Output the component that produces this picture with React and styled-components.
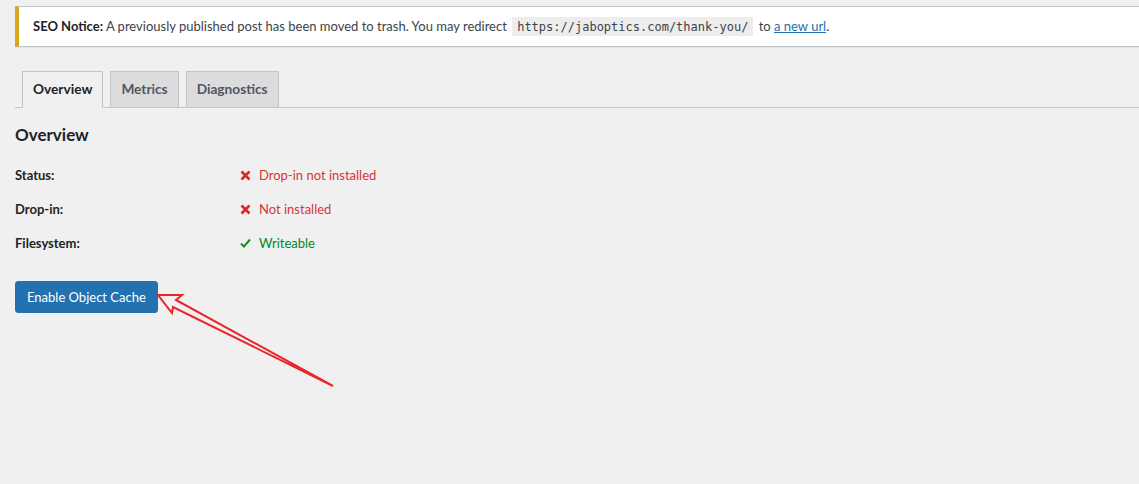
import React from "react";
import styled, { createGlobalStyle } from "styled-components";

const Global = createGlobalStyle`
  html, body { margin: 0; padding: 0; background: #f0f0f1; }
  body {
    font-family: Lato, "Noto Sans", sans-serif;
    font-size: 13px;
    line-height: 1.4;
    color: #3c434a;
  }
`;

const Page = styled.div`
  position: relative;
  width: 1139px;
  height: 484px;
  overflow: hidden;
  padding: 6px 0 0 15px;
  box-sizing: border-box;
`;

const Notice = styled.div`
  background: #fff;
  border: 1px solid #c3c4c7;
  border-left: 4px solid #dba617;
  border-right: none;
  box-shadow: 0 1px 1px rgba(0, 0, 0, 0.04);
  padding: 1px 12px;
`;

const NoticeText = styled.p`
  margin: 6px 0;
  padding: 2px;
  font-size: 13px;
  line-height: 20px;
  color: #3c434a;
  strong { font-weight: 700; color: #1d2327; }
`;

const Code = styled.code`
  font-family: "DejaVu Sans Mono", "Liberation Mono", monospace;
  font-size: 12px;
  background: rgba(0, 0, 0, 0.07);
  padding: 3px 5px 2px;
  margin: 0 2px;
  color: #3c434a;
`;

const Link = styled.a`
  color: #2271b1;
  text-decoration: underline;
`;

const TabBar = styled.nav`
  display: flex;
  margin-top: 24px;
  border-bottom: 1px solid #c3c4c7;
`;

const Tab = styled.a`
  margin-left: 7px;
  margin-bottom: -1px;
  padding: 5px 10px 6px;
  font-size: 13.7px;
  line-height: 24px;
  font-weight: 700;
  border: 1px solid #c3c4c7;
  background: ${(p) => (p.$active ? "#f0f0f1" : "#dcdcde")};
  border-bottom-color: ${(p) => (p.$active ? "#f0f0f1" : "#c3c4c7")};
  color: ${(p) => (p.$active ? "#1d2327" : "#50575e")};
  text-decoration: none;
`;

const Heading = styled.h2`
  margin: 16px 0 12px;
  font-size: 17px;
  line-height: 22px;
  font-weight: 700;
  color: #1d2327;
`;

const StatusTable = styled.div`
  display: grid;
  grid-template-columns: 224px 1fr;
  grid-auto-rows: 34px;
  align-items: center;
`;

const Label = styled.div`
  font-size: 13px;
  font-weight: 700;
  color: #1d2327;
`;

const Value = styled.div`
  display: flex;
  align-items: center;
  gap: 7px;
  font-size: 13px;
  color: ${(p) => (p.$ok ? "#008a20" : "#d63638")};
`;

const IconBox = styled.span`
  display: inline-flex;
  width: 13px;
  justify-content: center;
`;

const Button = styled.button`
  margin-top: 21px;
  height: 32px;
  padding: 0 11px;
  background: #2271b1;
  border: 1px solid #2271b1;
  border-radius: 3px;
  color: #fff;
  font-family: inherit;
  font-size: 13px;
  cursor: pointer;
`;

const Annotation = styled.svg`
  position: absolute;
  left: 0;
  top: 0;
  pointer-events: none;
`;

const Cross = () => (
  <svg width="11" height="11" viewBox="0 0 11 11">
    <path d="M1.5 1.5 L9.5 9.5 M9.5 1.5 L1.5 9.5" stroke="#e0262d" strokeWidth="2.6" strokeLinecap="butt" />
  </svg>
);

const Check = () => (
  <svg width="11" height="10" viewBox="0 0 11 10">
    <path d="M1 5.5 L4 8.5 L10 1.5" stroke="#1e8a2e" strokeWidth="2" fill="none" />
  </svg>
);

const rows = [
  { label: "Status:", value: "Drop-in not installed", ok: false },
  { label: "Drop-in:", value: "Not installed", ok: false },
  { label: "Filesystem:", value: "Writeable", ok: true },
];

export default function App() {
  return (
    <>
      <Global />
      <Page>
        <Notice>
          <NoticeText>
            <strong>SEO Notice:</strong> A previously published post has been moved to trash. You may redirect{" "}
            <Code>https://jaboptics.com/thank-you/</Code> to <Link href="#">a new url</Link>.
          </NoticeText>
        </Notice>
        <TabBar>
          <Tab $active href="#">Overview</Tab>
          <Tab href="#">Metrics</Tab>
          <Tab href="#">Diagnostics</Tab>
        </TabBar>
        <Heading>Overview</Heading>
        <StatusTable>
          {rows.map((r) => (
            <React.Fragment key={r.label}>
              <Label>{r.label}</Label>
              <Value $ok={r.ok}>
                <IconBox>{r.ok ? <Check /> : <Cross />}</IconBox>
                {r.value}
              </Value>
            </React.Fragment>
          ))}
        </StatusTable>
        <Button>Enable Object Cache</Button>
        <Annotation width="1139" height="484">
          <polygon
            points="158,295 182,295 176,300 333,386 173,307 172,313"
            fill="none"
            stroke="#e8262b"
            strokeWidth="2"
            strokeLinejoin="miter"
          />
        </Annotation>
      </Page>
    </>
  );
}
